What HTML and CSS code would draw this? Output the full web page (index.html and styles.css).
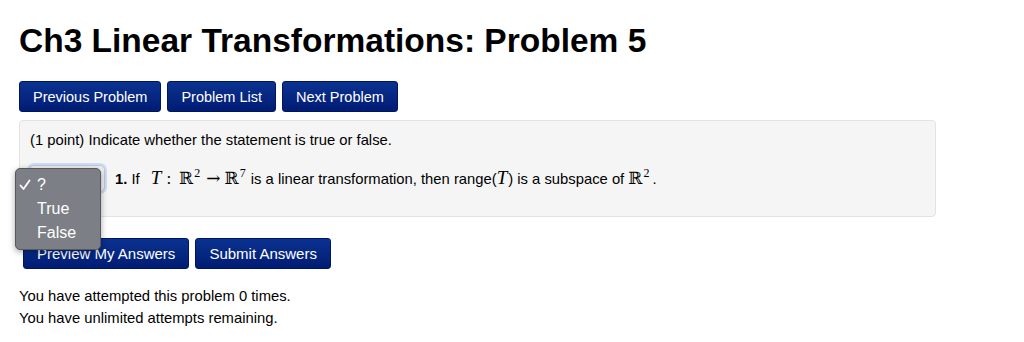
FILE: index.html
```html
<!DOCTYPE html>
<html>
<head>
<meta charset="utf-8">
<link rel="stylesheet" href="styles.css">
</head>
<body>
<h1 class="title">Ch3 Linear Transformations: Problem 5</h1>
<div class="nav">
  <button class="btn">Previous Problem</button>
  <button class="btn">Problem List</button>
  <button class="btn">Next Problem</button>
</div>
<div class="problem">
  <p class="intro">(1 point) Indicate whether the statement is true or false.</p>
  <div class="row">
    <div class="select"></div>
    <p class="stmt"><b>1.</b> If <span class="math math-lead"><i class="mi">T</i><span class="rel">:</span><span class="bb">ℝ</span><sup>2</sup><span class="arrow">→</span><span class="bb">ℝ</span><sup>7</sup></span> is a linear transformation, then range(<i class="mi mi-in">T</i>) is a subspace of <span class="math"><span class="bb">ℝ</span><sup>2</sup></span><span class="dot">.</span></p>
    <ul class="menu">
      <li class="opt"><svg class="check" width="12" height="12" viewBox="0 0 12 12"><path d="M1.5 6.5 L4.5 10 L10.5 1.5" fill="none" stroke="#fff" stroke-width="1.8" stroke-linecap="round" stroke-linejoin="round"/></svg>?</li>
      <li class="opt">True</li>
      <li class="opt">False</li>
    </ul>
  </div>
</div>
<div class="actions">
  <button class="btn btn-lg">Preview My Answers</button>
  <button class="btn btn-lg">Submit Answers</button>
</div>
<p class="info">You have attempted this problem 0 times.<br>You have unlimited attempts remaining.</p>
</body>
</html>
```
FILE: styles.css
```css
html, body { margin: 0; padding: 0; background: #fff; }
body {
  font-family: "Liberation Sans", Arial, sans-serif;
  color: #000;
  padding: 0 19px;
}
.title {
  margin: 22px 0 0;
  font-size: 33.5px;
  font-weight: bold;
  line-height: 38px;
}
.nav {
  display: flex;
  gap: 6px;
  margin-top: 21px;
}
.btn {
  height: 31px;
  padding: 0 13px;
  font-family: "Liberation Sans", Arial, sans-serif;
  font-size: 14.5px;
  color: #fff;
  background: linear-gradient(#0b3290, #001c74);
  border: 1px solid #00175e;
  border-radius: 3px;
}
.problem {
  margin-top: 8px;
  width: 895px;
  height: 85px;
  padding: 5px 10px;
  background: #f5f5f5;
  border: 1px solid #e3e3e3;
  border-radius: 4px;
}
.intro {
  margin: 4px 0 0;
  font-size: 14.8px;
  line-height: 20px;
}
.row {
  position: relative;
  display: flex;
  align-items: center;
  gap: 10px;
  margin-top: 15px;
}
.select {
  width: 74px;
  height: 25px;
  margin-left: -1px;
  background: #f0f0f0;
  border: 1px solid #b9c9e3;
  border-radius: 5px;
  box-shadow: 0 0 0 2px #cfdcf2;
}
.stmt {
  margin: 0;
  font-size: 14.8px;
  line-height: 20px;
}
.math-lead { margin-left: 7px; }
.mi {
  font-family: "Liberation Serif", "Times New Roman", serif;
  font-size: 19px;
}
.mi-in { margin: 0 1px 0 0; }
.rel {
  font-family: "Liberation Serif", serif;
  font-size: 17px;
  margin: 0 8px 0 5px;
}
.arrow {
  font-family: "DejaVu Serif", serif;
  font-size: 17px;
  margin: 0 4px 0 5px;
}
.bb {
  font-family: "DejaVu Serif", serif;
  font-size: 17px;
}
sup {
  font-family: "Liberation Serif", serif;
  font-size: 12px;
  vertical-align: 7px;
  line-height: 0;
  margin-left: 1px;
  margin-right: 1px;
}
.dot { margin-left: 2px; }
.menu {
  position: absolute;
  left: -15px;
  top: 3px;
  width: 84px;
  margin: 0;
  padding: 4px 0;
  list-style: none;
  background: #7c7f85;
  border: 1px solid #56585c;
  border-radius: 5px;
  box-shadow: 0 2px 6px rgba(0,0,0,0.35);
}
.opt {
  height: 24px;
  line-height: 24px;
  padding-left: 21px;
  position: relative;
  font-size: 16px;
  color: #fff;
}
.check {
  position: absolute;
  left: 3px;
  top: 6px;
}
.actions {
  display: flex;
  gap: 6px;
  margin: 21px 0 0 4px;
}
.btn-lg { font-size: 15px; padding: 0 13px; }
.info {
  margin: 16px 0 0;
  font-size: 14.8px;
  line-height: 22px;
}
```
